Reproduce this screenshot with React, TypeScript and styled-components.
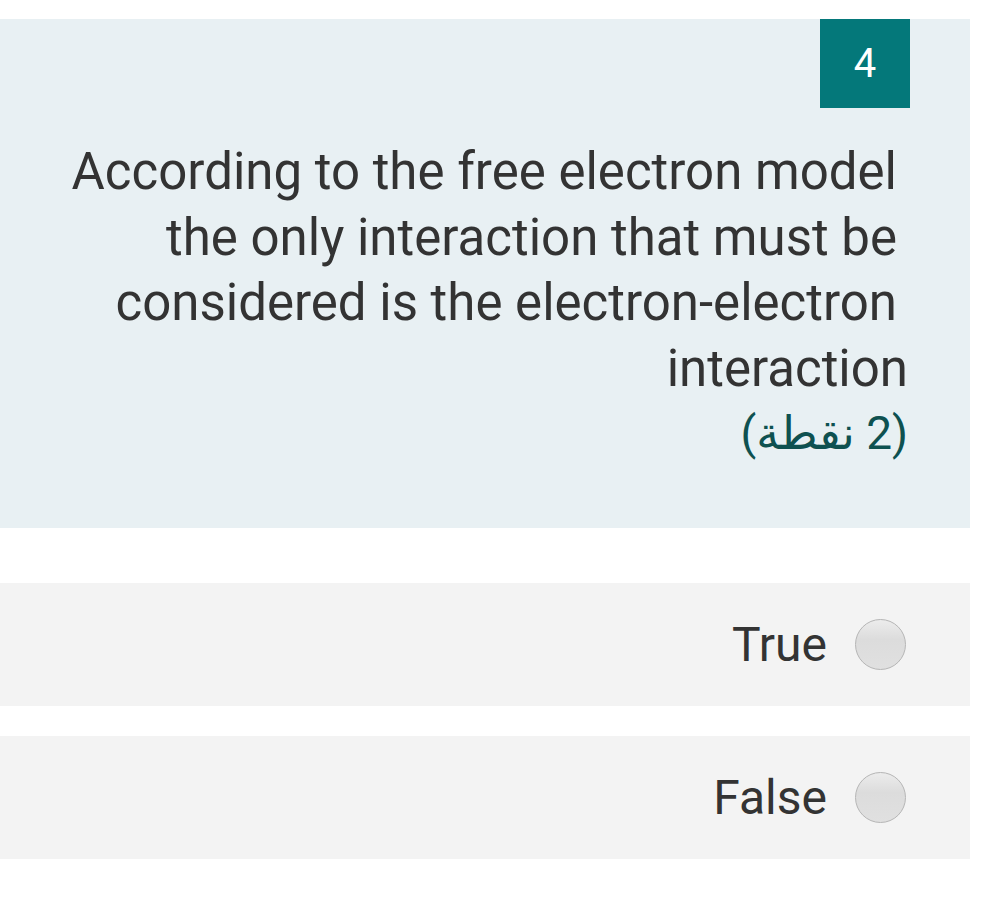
import React from "react";
import styled, { createGlobalStyle } from "styled-components";

const GlobalStyle = createGlobalStyle`
  html, body {
    margin: 0;
    padding: 0;
    background: #ffffff;
  }
  body {
    font-family: Roboto, "Noto Sans", "DejaVu Sans", sans-serif;
  }
`;

const Page = styled.div`
  padding-top: 19px;
  width: 970px;
`;

const QuestionCard = styled.section`
  background: #e8f0f3;
  padding: 0 60px 61px 60px;
  direction: rtl;
  display: flex;
  flex-direction: column;
`;

const Badge = styled.div`
  width: 90px;
  height: 89px;
  background: #04787a;
  color: #ffffff;
  font-size: 40px;
  display: flex;
  align-items: center;
  justify-content: center;
  align-self: flex-start;
`;

const QuestionText = styled.div`
  margin-top: 31px;
  font-size: 51px;
  line-height: 65.5px;
  color: #333333;
  text-align: right;
  padding-right: 2px;
`;

const Line = styled.div<{ $inset?: boolean }>`
  padding-right: ${(p) => (p.$inset ? "11px" : "0")};
  white-space: nowrap;
`;

const Points = styled.div`
  color: #0e5150;
  direction: rtl;
  font-size: 46px;
  text-align: right;
`;

const Options = styled.div`
  margin-top: 55px;
  display: flex;
  flex-direction: column;
  gap: 30px;
`;

const Option = styled.label`
  height: 123px;
  background: #f3f3f3;
  display: flex;
  align-items: center;
  justify-content: flex-end;
  gap: 28px;
  padding-right: 64px;
  cursor: pointer;
`;

const OptionText = styled.span`
  font-size: 48px;
  color: #333333;
`;

const Radio = styled.span`
  width: 51px;
  height: 51px;
  border-radius: 50%;
  border: 1px solid #b5b5b5;
  background: linear-gradient(#ececec, #dcdcdc 40%, #e0e0e0);
  box-sizing: border-box;
`;

export default function App() {
  return (
    <>
      <GlobalStyle />
      <Page>
        <QuestionCard>
          <Badge>4</Badge>
          <QuestionText>
            <Line $inset dir="ltr">According to the free electron model</Line>
            <Line $inset dir="ltr">the only interaction that must be</Line>
            <Line $inset dir="ltr">considered is the electron-electron</Line>
            <Line dir="ltr">interaction</Line>
            <Points>(2 نقطة)</Points>
          </QuestionText>
        </QuestionCard>
        <Options>
          <Option>
            <OptionText>True</OptionText>
            <Radio />
          </Option>
          <Option>
            <OptionText>False</OptionText>
            <Radio />
          </Option>
        </Options>
      </Page>
    </>
  );
}
